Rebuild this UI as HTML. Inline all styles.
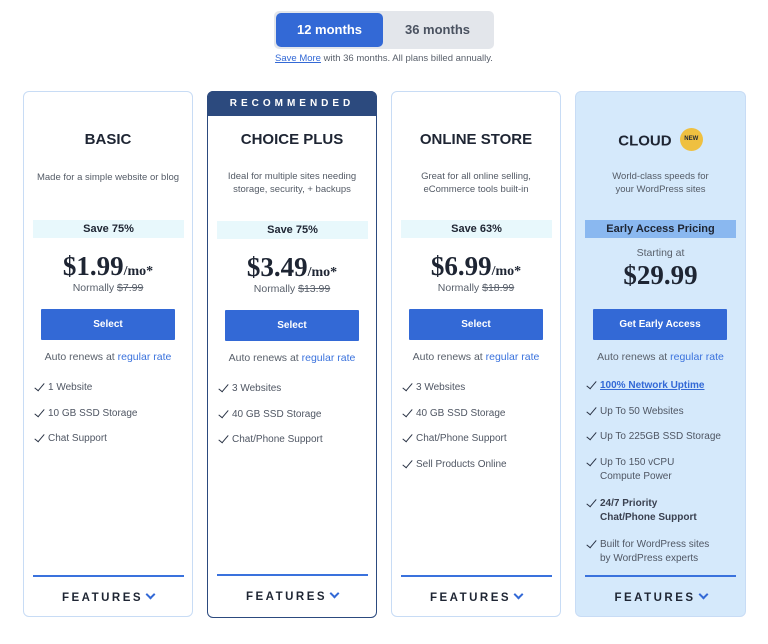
<!DOCTYPE html>
<html><head><meta charset="utf-8"><style>
*{margin:0;padding:0;box-sizing:border-box}
body{width:768px;height:644px;background:#fff;font-family:"Liberation Sans",sans-serif;color:#1e2533;position:relative;overflow:hidden}
.abs{position:absolute}
.tog{left:274px;top:11px;width:220px;height:38px;background:#e3e6eb;border-radius:5px}
.tog .on{position:absolute;left:2px;top:2px;width:107px;height:34px;background:#3369d6;border-radius:5px;color:#fff;font-weight:bold;font-size:13px;text-align:center;line-height:34px}
.tog .off{position:absolute;left:109px;top:2px;width:109px;height:34px;color:#4a5260;font-weight:bold;font-size:13px;text-align:center;line-height:34px}
.sm{left:200px;width:368px;top:53px;text-align:center;font-size:9.5px;color:#59606b}
.sm u{color:#3369d6}
.card{position:absolute;top:91px;width:170px;height:526px;border:1px solid #c8dcf5;border-radius:6px;background:#fff}
.card>*{position:absolute;left:0;width:100%;text-align:center}
.t{top:38px;font-size:15px;font-weight:bold;line-height:20px;color:#1e2533}
.d{top:78px;font-size:9.5px;line-height:13px;color:#545b66}
.sv{top:128px;left:9px!important;width:151px!important;height:18px;background:#e8f8fc;font-size:11px;font-weight:bold;line-height:18px}
.p{top:159px;font-family:"Liberation Serif",serif;font-weight:bold;font-size:27px;line-height:30px;color:#1e2533}
.p small{font-size:14px}
.n{top:190px;font-size:10.5px;color:#59606b;line-height:13px}
.n s{color:#59606b}
.b{top:217px;left:17px!important;width:134px!important;height:31px;background:#3369d6;color:#fff;font-size:10px;font-weight:bold;line-height:31px;border-radius:1px}
.ar{top:259px;font-size:10.5px;color:#59606b;line-height:13px}
.ar span{color:#3a72dd}
ul{list-style:none;text-align:left!important;left:10px!important;top:289px;font-size:10px;color:#4f5663}
li{height:25.5px;line-height:14px;position:relative;padding-left:14px}
li:before{content:"";position:absolute;left:3px;top:0px;width:4px;height:9px;border:solid #2a3345;border-width:0 1.5px 1.5px 0;transform:rotate(40deg)}
.ln{top:483px;left:9px!important;width:151px!important;height:1.5px;background:#3a72dd}
.f{top:498px;font-size:11.5px;font-weight:bold;letter-spacing:2.5px;line-height:16px;color:#1e2533}
.f i{display:inline-block;width:7px;height:7px;border:solid #3369d6;border-width:0 2px 2px 0;transform:rotate(45deg);margin-left:4px;position:relative;top:-3px}
</style></head><body>
<div class="abs tog"><div class="on">12 months</div><div class="off">36 months</div></div>
<div class="abs sm"><u>Save More</u> with 36 months. All plans billed annually.</div>

<div class="card" style="left:23px">
<div class="t">BASIC</div>
<div class="d" style="top:79px">Made for a simple website or blog</div>
<div class="sv">Save 75%</div>
<div class="p">$1.99<small>/mo*</small></div>
<div class="n">Normally <s>$7.99</s></div>
<div class="b">Select</div>
<div class="ar">Auto renews at <span>regular rate</span></div>
<ul><li>1 Website</li><li>10 GB SSD Storage</li><li>Chat Support</li></ul>
<div class="ln"></div>
<div class="f">FEATURES<i></i></div>
</div>

<div class="card" style="left:207px;border:1.5px solid #2c4a7e;height:527px">
<div style="top:-1px;height:25px;background:#2c4a7e;color:#fff;font-size:10px;font-weight:bold;letter-spacing:4px;line-height:26px;border-radius:5px 5px 0 0">RECOMMENDED</div>
<div class="t">CHOICE PLUS</div>
<div class="d">Ideal for multiple sites needing<br>storage, security, + backups</div>
<div class="sv" style="top:129px">Save 75%</div>
<div class="p" style="top:160px">$3.49<small>/mo*</small></div>
<div class="n" style="top:191px">Normally <s>$13.99</s></div>
<div class="b" style="top:218px">Select</div>
<div class="ar" style="top:260px">Auto renews at <span>regular rate</span></div>
<ul style="top:290px"><li>3 Websites</li><li>40 GB SSD Storage</li><li>Chat/Phone Support</li></ul>
<div class="ln" style="top:482px"></div>
<div class="f" style="top:497px">FEATURES<i></i></div>
</div>

<div class="card" style="left:391px">
<div class="t">ONLINE STORE</div>
<div class="d">Great for all online selling,<br>eCommerce tools built-in</div>
<div class="sv">Save 63%</div>
<div class="p">$6.99<small>/mo*</small></div>
<div class="n">Normally <s>$18.99</s></div>
<div class="b">Select</div>
<div class="ar">Auto renews at <span>regular rate</span></div>
<ul><li>3 Websites</li><li>40 GB SSD Storage</li><li>Chat/Phone Support</li><li>Sell Products Online</li></ul>
<div class="ln"></div>
<div class="f">FEATURES<i></i></div>
</div>

<div class="card" style="left:575px;background:#d5e9fb;width:171px">
<div class="t">CLOUD <span style="display:inline-block;width:23px;height:23px;border-radius:50%;background:#efc040;font-size:6px;line-height:23px;vertical-align:middle;margin-left:4px;position:relative;top:-2px">NEW</span></div>
<div class="d">World-class speeds for<br>your WordPress sites</div>
<div class="sv" style="background:#8ab8f0;font-size:11px">Early Access Pricing</div>
<div class="n" style="top:155px">Starting at</div>
<div class="p" style="top:168px;font-size:27px">$29.99</div>
<div class="b">Get Early Access</div>
<div class="ar">Auto renews at <span>regular rate</span></div>
<ul style="top:287px"><li style="color:#3369d6;font-weight:bold;text-decoration:underline">100% Network Uptime</li><li>Up To 50 Websites</li><li>Up To 225GB SSD Storage</li><li style="height:41px">Up To 150 vCPU<br>Compute Power</li><li style="height:41px;font-weight:bold;color:#3a4150">24/7 Priority<br>Chat/Phone Support</li><li>Built for WordPress sites<br>by WordPress experts</li></ul>
<div class="ln"></div>
<div class="f">FEATURES<i></i></div>
</div>
</body></html>
